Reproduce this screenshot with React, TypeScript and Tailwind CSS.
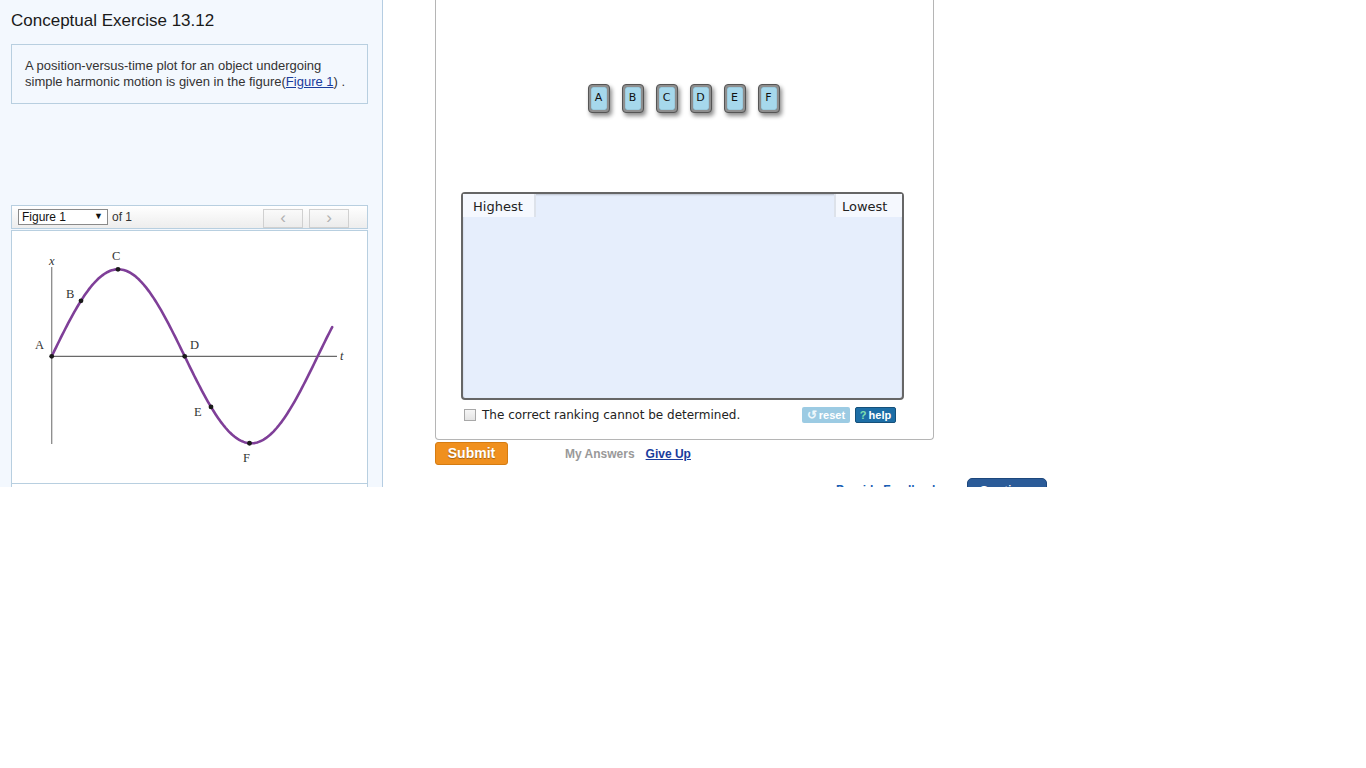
import React from "react";

const P = 266;
const X0 = 51.7;
const Y0 = 356.3;
const AMP = 87;
const yAt = (x: number) => Y0 - AMP * Math.sin((2 * Math.PI * (x - X0)) / P);

function Figure() {
  const pts: string[] = [];
  for (let x = X0; x <= 332.3; x += 1.5) {
    pts.push(`${x.toFixed(1)},${yAt(x).toFixed(1)}`);
  }
  const dots = [X0, 81, 118, 184.7, 211, 249.5];
  const serif = { fontFamily: '"Liberation Serif", "DejaVu Serif", serif' };
  return (
    <svg width="356" height="252" viewBox="12 231 356 252" className="block">
      <line x1="51.7" y1="267" x2="51.7" y2="444" stroke="#8a8a8a" strokeWidth="1.3" />
      <line x1="51.7" y1="356.3" x2="337" y2="356.3" stroke="#444" strokeWidth="1" />
      <polyline points={pts.join(" ")} fill="none" stroke="#7f3f98" strokeWidth="2.6" strokeLinecap="round" />
      {dots.map((x, i) => (
        <circle key={i} cx={x} cy={yAt(x)} r="2.4" fill="#1a1a1a" />
      ))}
      <g fill="#333" fontSize="12.5" style={serif}>
        <text x="35" y="349">A</text>
        <text x="66" y="298">B</text>
        <text x="112" y="260">C</text>
        <text x="190" y="349">D</text>
        <text x="194" y="416">E</text>
        <text x="243" y="462">F</text>
        <text x="49" y="265" fontStyle="italic">x</text>
        <text x="340" y="360" fontStyle="italic">t</text>
      </g>
    </svg>
  );
}

function Tile({ l }: { l: string }) {
  return (
    <div className="w-[22px] h-[29px] rounded-[4px] border border-[#555] bg-[#8e8e8e] p-[2px] shadow-[2px_3px_4px_rgba(0,0,0,0.45)]">
      <div className="w-full h-full rounded-[2px] bg-[#a6d8ec] flex items-center justify-center text-[11px] text-[#111] shadow-[inset_0_0_1px_rgba(0,0,0,0.6)]" style={{ fontFamily: '"DejaVu Sans", Verdana, sans-serif' }}>
        {l}
      </div>
    </div>
  );
}

export default function App() {
  const arial = { fontFamily: '"Liberation Sans", Arial, sans-serif' };
  const verdana = { fontFamily: '"DejaVu Sans", Verdana, sans-serif' };
  return (
    <div className="w-[1366px] h-[768px] bg-white">
      <div className="h-[487px] overflow-hidden flex items-start" style={arial}>
        {/* Left panel */}
        <div className="w-[383px] shrink-0 h-full bg-[#f3f8fe] border-r border-[#b5cde2] pl-[11px] pr-[14px] pt-[10px]">
          <div className="text-[17px] leading-[22px] text-[#1a1a1a]">Conceptual Exercise 13.12</div>
          <div className="mt-[12px] h-[60px] border border-[#b8cfe0] pl-[13px] pt-[13px] text-[13px] leading-[16px] text-[#333]">
            A position-versus-time plot for an object undergoing
            <br />
            simple harmonic motion is given in the figure(
            <span className="text-[#1a3c9c] underline">Figure 1</span>) .
          </div>
          <div className="mt-[101px] h-[24px] border border-[#b8cfe0] bg-gradient-to-b from-white to-[#ededed] flex items-center pl-[6px] pr-[18px]">
            <div className="w-[90px] h-[16px] border border-[#8a8a8a] bg-white flex items-center justify-between pl-[3px] pr-[4px] text-[12px] text-[#111]">
              <span>Figure 1</span>
              <span className="text-[9px]">▼</span>
            </div>
            <span className="ml-[4px] text-[12px] text-[#333]">of 1</span>
            <div className="ml-auto flex gap-[6px] self-end">
              <div className="w-[40px] h-[19px] border border-[#d0d0d0] bg-gradient-to-b from-[#fafafa] to-[#ececec] flex items-center justify-center text-[#b0b0b0] text-[17px] leading-none pb-[2px]">‹</div>
              <div className="w-[40px] h-[19px] border border-[#d0d0d0] bg-gradient-to-b from-[#fafafa] to-[#ececec] flex items-center justify-center text-[#b0b0b0] text-[17px] leading-none pb-[2px]">›</div>
            </div>
          </div>
          <div className="mt-px border border-[#b8cfe0] bg-white">
            <Figure />
            <div className="border-t border-[#b8cfe0] h-[60px]" />
          </div>
        </div>

        {/* Right content */}
        <div className="ml-[52px] shrink-0 flex flex-col">
          <div className="w-[499px] h-[440px] shrink-0 border-x border-b border-[#b5b5b5] rounded-b-[4px] bg-white flex flex-col">
            <div className="pt-[84px] flex justify-center gap-[12px] pr-[2px]">
              {["A", "B", "C", "D", "E", "F"].map((l) => (
                <Tile key={l} l={l} />
              ))}
            </div>
            <div className="mt-[79px] ml-[25px] w-[443px] h-[208px] shrink-0 border-2 border-[#666] rounded-[4px] bg-[#e6eefc] shadow-[inset_0_1px_2px_rgba(0,0,0,0.2)]">
              <div className="flex justify-between text-[13px] text-[#222]" style={verdana}>
                <div className="w-[73px] h-[23px] bg-[#f5f8fe] border-r-2 border-[#dde2ea] pl-[10px] pt-[2px] leading-[21px]">Highest</div>
                <div className="w-[68px] h-[23px] bg-[#f5f8fe] border-l-2 border-[#dde2ea] pl-[6px] pt-[2px] leading-[21px]">Lowest</div>
              </div>
            </div>
            <div className="mt-[7px] flex items-center pl-[28px] pr-[37px] h-[16px]">
              <div className="w-[12px] h-[12px] border border-[#a8a8a8] bg-gradient-to-b from-[#f6f6f6] to-[#e4e4e4]" />
              <span className="ml-[6px] text-[12px] text-[#222]" style={verdana}>The correct ranking cannot be determined.</span>
              <div className="ml-auto flex gap-[5px]">
                <div className="w-[48px] h-[16px] bg-[#9ccbe3] rounded-[2px] flex items-center justify-center text-[11px] font-bold text-white gap-[2px]">
                  <span className="text-[#eef7fb] text-[12px]">↺</span>reset
                </div>
                <div className="w-[41px] h-[16px] bg-[#1d6ea6] rounded-[2px] border border-[#15507a] flex items-center justify-center text-[11px] font-bold text-white gap-[2px]">
                  <span className="text-[#7fe0b0]">?</span>help
                </div>
              </div>
            </div>
          </div>
          <div className="mt-[2px] shrink-0 flex items-center h-[23px]">
            <div className="w-[73px] h-[23px] bg-[#f0901e] border border-[#d57c12] rounded-[3px] flex items-center justify-center text-white font-bold text-[14px] [text-shadow:0_1px_1px_rgba(0,0,0,0.35)]">
              Submit
            </div>
            <span className="ml-[57px] text-[12px] font-bold text-[#999]">My Answers</span>
            <span className="ml-[11px] text-[12px] font-bold text-[#1a3c9c] underline">Give Up</span>
          </div>
          <div className="mt-[13px] shrink-0 flex items-start">
            <span className="ml-[401px] mt-[3px] text-[12px] font-bold text-[#1a5fb4]">Provide Feedback</span>
            <div className="ml-[28px] w-[80px] h-[26px] bg-[#2b5b98] border border-[#1d477c] rounded-[5px] text-white text-[14px] flex items-center justify-center">
              Continue
            </div>
          </div>
        </div>
      </div>
    </div>
  );
}
